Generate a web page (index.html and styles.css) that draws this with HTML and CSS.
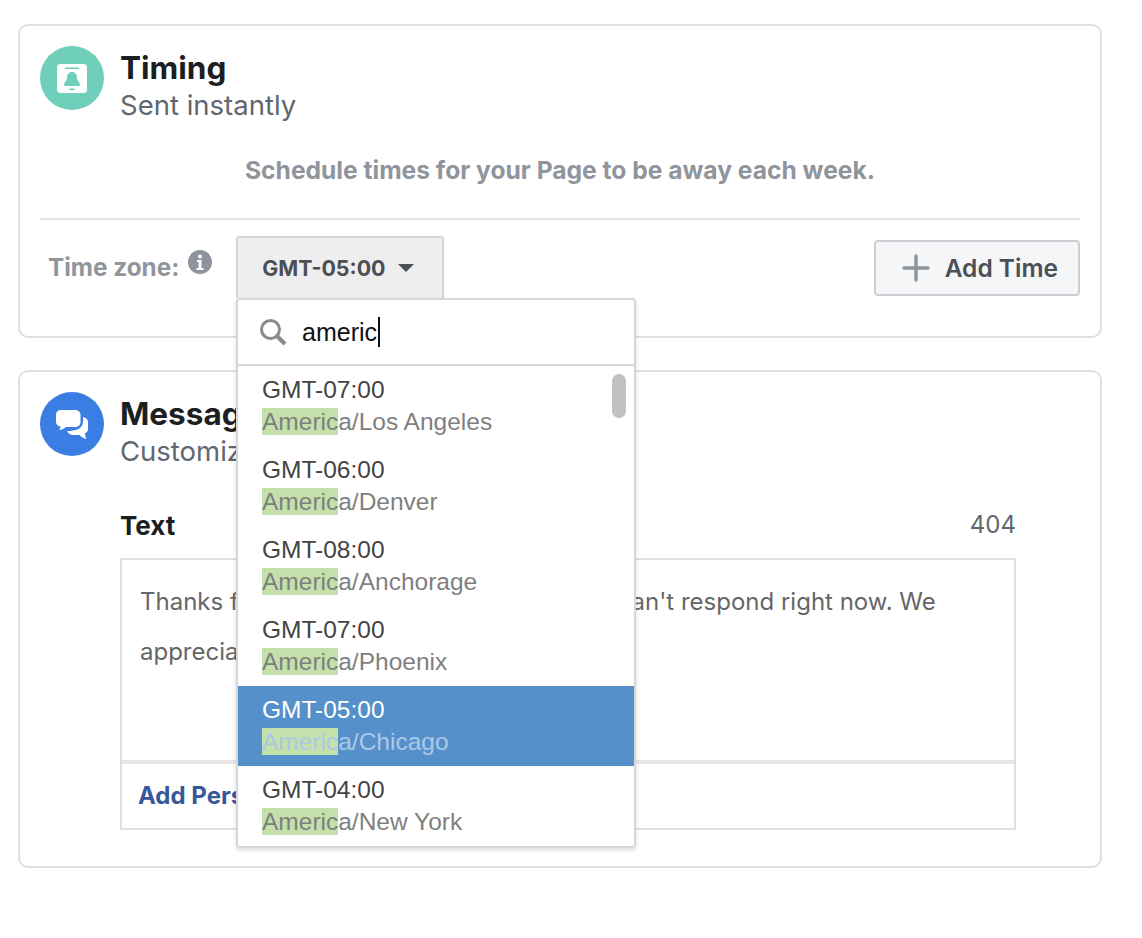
FILE: index.html
```html
<!DOCTYPE html>
<html lang="en">
<head>
  <meta charset="UTF-8">
  <title>Timing</title>
  <link rel="stylesheet" href="styles.css">
</head>
<body>
  <section class="card card-timing">
    <div class="card-head">
      <div class="round-icon green">
        <svg width="30" height="29" viewBox="0 0 30 29">
          <rect width="30" height="29" rx="3.500" fill="#fff"/>
          <rect x="8" y="3.500" width="14" height="1.500" fill="#6fcfba"/>
          <path d="M15 8c-3.300 0-5 2.700-5 5.500 0 3.500-3 5-3 7.200 0 .9.700 1.300 1.500 1.300h13c.8 0 1.500-.4 1.500-1.300 0-2.200-3-3.700-3-7.200C20 10.700 18.300 8 15 8z" fill="#6fcfba"/>
          <path d="M12 24.500h6c-.5 1.200-1.700 2-3 2s-2.500-.8-3-2z" fill="#6fcfba"/>
        </svg>
      </div>
      <div>
        <div class="card-title">Timing</div>
        <div class="card-sub">Sent instantly</div>
      </div>
    </div>
    <p class="schedule-note">Schedule times for your Page to be away each week.</p>
    <div class="zone-row">
      <span class="zone-label">Time zone:</span>
      <svg class="info-icon" width="24" height="24" viewBox="0 0 24 24">
        <circle cx="12" cy="12" r="12" fill="#8d949e"/>
        <circle cx="12" cy="6.500" r="2" fill="#fff"/>
        <path d="M9 10h4.500v8H15.500v2h-7v-2h2v-6H9z" fill="#fff"/>
      </svg>
      <div class="zone-button">GMT-05:00<span class="caret"></span></div>
      <div class="add-time">
        <svg width="28" height="28" viewBox="0 0 28 28">
          <path d="M14 2v24M2 14h24" stroke="#8d949e" stroke-width="3.400" stroke-linecap="round"/>
        </svg>
        Add Time
      </div>
    </div>

    <div class="zone-menu">
      <div class="zone-search">
        <svg width="30" height="30" viewBox="0 0 30 30" fill="none" stroke="#8a8a8a">
          <circle cx="12.500" cy="12.500" r="9" stroke-width="3"/>
          <path d="M19 19l8 8" stroke-width="4"/>
        </svg>
        <span class="search-text">americ</span><span class="cursor"></span>
      </div>
      <div class="zone-list">
        <div class="zone-item"><div class="gmt">GMT-07:00</div><div class="city"><mark>Americ</mark>a/Los Angeles</div></div>
        <div class="zone-item"><div class="gmt">GMT-06:00</div><div class="city"><mark>Americ</mark>a/Denver</div></div>
        <div class="zone-item"><div class="gmt">GMT-08:00</div><div class="city"><mark>Americ</mark>a/Anchorage</div></div>
        <div class="zone-item"><div class="gmt">GMT-07:00</div><div class="city"><mark>Americ</mark>a/Phoenix</div></div>
        <div class="zone-item active"><div class="gmt">GMT-05:00</div><div class="city"><mark>Americ</mark>a/Chicago</div></div>
        <div class="zone-item"><div class="gmt">GMT-04:00</div><div class="city"><mark>Americ</mark>a/New York</div></div>
        <div class="scroll-thumb"></div>
      </div>
    </div>
  </section>

  <section class="card card-message">
    <div class="card-head">
      <div class="round-icon blue">
        <svg width="44" height="44" viewBox="0 0 44 44">
          <path d="M11 8h14c3 0 5.500 2 5.500 5v7c0 3-2.500 5-5.500 5H16c-2 2-4.500 3-7 3 1-1 1.500-2.200 1.500-3.500C8 24 6 22.500 6 20v-7c0-3 2-5 5-5z" fill="#fff"/>
          <path d="M33 15c3 .5 5 2.500 5 5v7c0 2-1 3.500-3 4.300 0 2 .5 3.700 1.500 5.700-2.700-.5-5-2-7-4H23c-2.500 0-4.500-1.500-6-4 7 0 12-1.500 14.500-4.500 1.500-2.500 2-5.500 1.500-9.500z" fill="#fff"/>
        </svg>
      </div>
      <div>
        <div class="card-title">Message</div>
        <div class="card-sub">Customize your message</div>
      </div>
    </div>
    <div class="text-block">
      <div class="text-head">
        <span class="text-label">Text</span>
        <span class="text-count">404</span>
      </div>
      <div class="text-box">
        <div class="text-body">Thanks for messaging us. We're sorry we can't respond right now. We appreciate your patience.</div>
        <div class="text-foot">Add Personalization</div>
      </div>
    </div>
  </section>
</body>
</html>
```

FILE: styles.css
```css
body {
  margin: 0;
  padding: 24px 40px 0 18px;
  background: #fff;
  font-family: Inter, sans-serif;
}
.card {
  box-sizing: border-box;
  border: 2px solid #dddfe2;
  border-radius: 10px;
  background: #fff;
}
.card-timing {
  position: relative;
  height: 314px;
  margin-bottom: 32px;
  padding: 20px 20px 0;
}
.card-message {
  height: 498px;
  padding: 20px 20px 0;
}
.card-head {
  display: flex;
  gap: 16px;
}
.round-icon {
  width: 64px;
  height: 64px;
  border-radius: 50%;
  display: flex;
  align-items: center;
  justify-content: center;
  flex-shrink: 0;
}
.green { background: #6fcfba; }
.blue { background: #3a7ee4; }
.card-title {
  margin-top: 3px;
  font-size: 31.5px;
  line-height: 38px;
  font-weight: 700;
  color: #1c1e21;
}
.card-sub {
  margin-top: -1px;
  font-size: 27.5px;
  line-height: 38px;
  color: #606770;
}
.schedule-note {
  margin: 30px 0 0;
  text-align: center;
  font-size: 24.6px;
  line-height: 32px;
  font-weight: 700;
  color: #90949c;
}
.zone-row {
  display: flex;
  align-items: flex-start;
  height: 70px;
  margin-top: 32px;
  padding-top: 16px;
  border-top: 2px solid #e4e6e9;
}
.zone-label {
  margin: 16px 0 0 8px;
  font-size: 24.3px;
  line-height: 30px;
  font-weight: 700;
  color: #90949c;
}
.info-icon { margin: 14px 0 0 9px; }
.zone-button {
  box-sizing: border-box;
  display: flex;
  align-items: center;
  width: 208px;
  height: 62px;
  margin-left: 24px;
  padding-left: 24px;
  border: 2px solid #d3d5d8;
  border-bottom: 0;
  border-radius: 3px 3px 0 0;
  background: #eeeeee;
  font-size: 21.4px;
  font-weight: 700;
  color: #4b4f56;
}
.caret {
  width: 0;
  height: 0;
  margin-left: 12px;
  border-left: 8px solid transparent;
  border-right: 8px solid transparent;
  border-top: 8px solid #4b4f56;
}
.add-time {
  box-sizing: border-box;
  display: flex;
  align-items: center;
  gap: 15px;
  height: 56px;
  margin: 4px 0 0 auto;
  padding: 0 20px 0 26px;
  border: 2px solid #ccd0d5;
  border-radius: 4px;
  background: #f5f6f7;
  font-size: 24.5px;
  font-weight: 600;
  color: #4b4f56;
}
.zone-menu {
  position: absolute;
  left: 216px;
  top: 272px;
  z-index: 5;
  box-sizing: border-box;
  width: 400px;
  height: 550px;
  border: 2px solid #d6d7da;
  border-radius: 4px;
  background: #fff;
  box-shadow: 0 2px 4px rgba(0,0,0,0.15);
  font-family: "Liberation Sans", Arial, sans-serif;
  overflow: hidden;
}
.zone-search {
  box-sizing: border-box;
  display: flex;
  align-items: center;
  height: 66px;
  padding-left: 20px;
  border-bottom: 2px solid #d6d7da;
}
.search-text {
  margin-left: 14px;
  font-size: 25px;
  color: #111;
}
.cursor {
  width: 2px;
  height: 30px;
  margin-left: 1px;
  background: #111;
}
.zone-list {
  position: relative;
}
.zone-item {
  box-sizing: border-box;
  height: 80px;
  padding: 8px 24px 0;
}
.gmt {
  font-size: 24.5px;
  line-height: 32px;
  color: #444;
}
.city {
  font-size: 24.5px;
  line-height: 32px;
  color: #7f7f7f;
}
.city mark {
  background: #c5e1ab;
  color: inherit;
}
.zone-item.active { background: #5690ca; }
.active .gmt { color: #fff; }
.active .city { color: #abc8e6; }
.scroll-thumb {
  position: absolute;
  right: 8px;
  top: 8px;
  width: 14px;
  height: 44px;
  border-radius: 7px;
  background: #c1c1c1;
}
.text-block {
  width: 896px;
  margin: 37px 0 0 80px;
}
.text-head {
  display: flex;
  justify-content: space-between;
  align-items: center;
  height: 36px;
}
.text-label {
  font-size: 26px;
  font-weight: 700;
  color: #1c1e21;
}
.text-count {
  margin-top: -2px;
  font-size: 24px;
  color: #606770;
}
.text-box {
  margin-top: 15px;
  border: 2px solid #dddfe2;
}
.text-body {
  box-sizing: border-box;
  height: 200px;
  padding: 17px 18px 0;
  font-size: 24px;
  line-height: 50px;
  color: #666;
}
.text-foot {
  box-sizing: border-box;
  height: 68px;
  padding: 17px 16px 0;
  border-top: 4px solid #e6e6e6;
  font-size: 24px;
  font-weight: 700;
  color: #365899;
}
```
